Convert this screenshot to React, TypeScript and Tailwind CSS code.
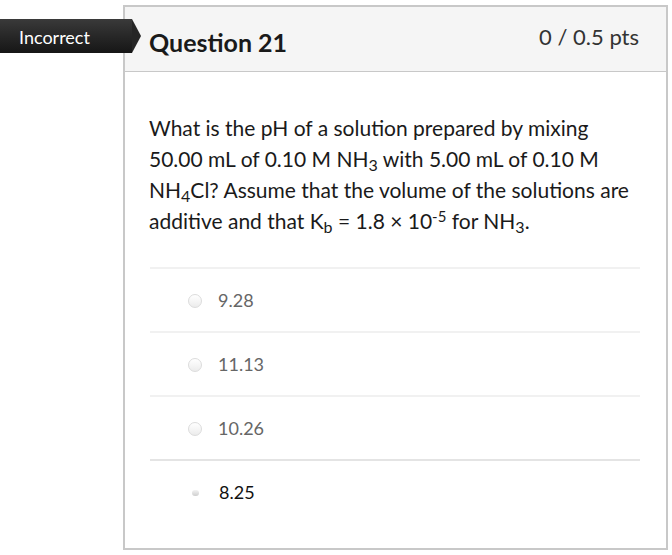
import React from 'react';

type Answer = { label: string; dim?: boolean };

const answers: Answer[] = [
  { label: '9.28', dim: true },
  { label: '11.13', dim: true },
  { label: '10.26', dim: true },
  { label: '8.25' },
];

const Radio: React.FC<{ small?: boolean }> = ({ small }) =>
  small ? (
    <span className="w-[7px] h-[6px] rounded-full bg-gradient-to-b from-[#f2f2f2] to-[#cfcfcf] mx-[4px]" />
  ) : (
    <span className="w-[14px] h-[14px] rounded-full border border-[#dcdcdc] bg-gradient-to-b from-white to-[#ececec]" />
  );

const App: React.FC = () => {
  return (
    <div className="relative w-[672px] h-[555px] bg-white font-['Lato','Noto_Sans',sans-serif]">
      {/* Incorrect badge */}
      <div className="absolute left-0 top-[19px] flex items-center z-10">
        <div className="h-[34px] w-[132px] bg-gradient-to-b from-[#3a3a3a] to-[#161616] text-white text-[18px] flex items-center pl-[19px] pt-[3px]">
          Incorrect
        </div>
        <div className="w-0 h-0 border-y-[17px] border-y-transparent border-l-[9px] border-l-[#262626]" />
      </div>

      <div className="absolute left-[123px] top-[5px] w-[545px] h-[545px] border-2 border-[#c8c8c8] flex flex-col">
        {/* header */}
        <div className="h-[65px] bg-[#f5f5f5] border-b border-[#c8c8c8] flex items-center justify-between pl-[24px] pr-[27px] pt-[8px]">
          <h2 className="text-[25px] font-bold text-[#1a1a1a]">Question 21</h2>
          <span className="text-[22px] text-[#333] -mt-[14px]">0 / 0.5 pts</span>
        </div>

        {/* body */}
        <div className="pl-[24px] pr-[26px] pt-[40px]">
          <p className="text-[21px] leading-[31px] text-[#1a1a1a]">
            What is the pH of a solution prepared by mixing 50.00 mL of 0.10 M NH<sub className="text-[16px]">3</sub> with 5.00 mL of 0.10 M
            NH<sub className="text-[16px]">4</sub>Cl? Assume that the volume of the solutions are additive and that K<sub className="text-[16px]">b</sub> = 1.8 × 10<sup className="text-[15px]">-5</sup> for NH<sub className="text-[16px]">3</sub>.
          </p>

          <div className="mt-[31px] w-[490px] ml-[1px]">
            {answers.map((a, i) => (
              <div
                key={a.label}
                className={`h-[64px] flex items-center gap-[16px] pl-[38px] pt-[1px] ${i < 3 ? 'border-t-2 border-[#f1f1f1]' : 'border-t-2 border-[#e4e4e4]'}`}
              >
                <Radio small={!a.dim} />
                <span className={`text-[18px] ${a.dim ? 'text-[#666]' : 'text-[#111]'}`}>{a.label}</span>
              </div>
            ))}
          </div>
        </div>
      </div>
    </div>
  );
};

export default App;
